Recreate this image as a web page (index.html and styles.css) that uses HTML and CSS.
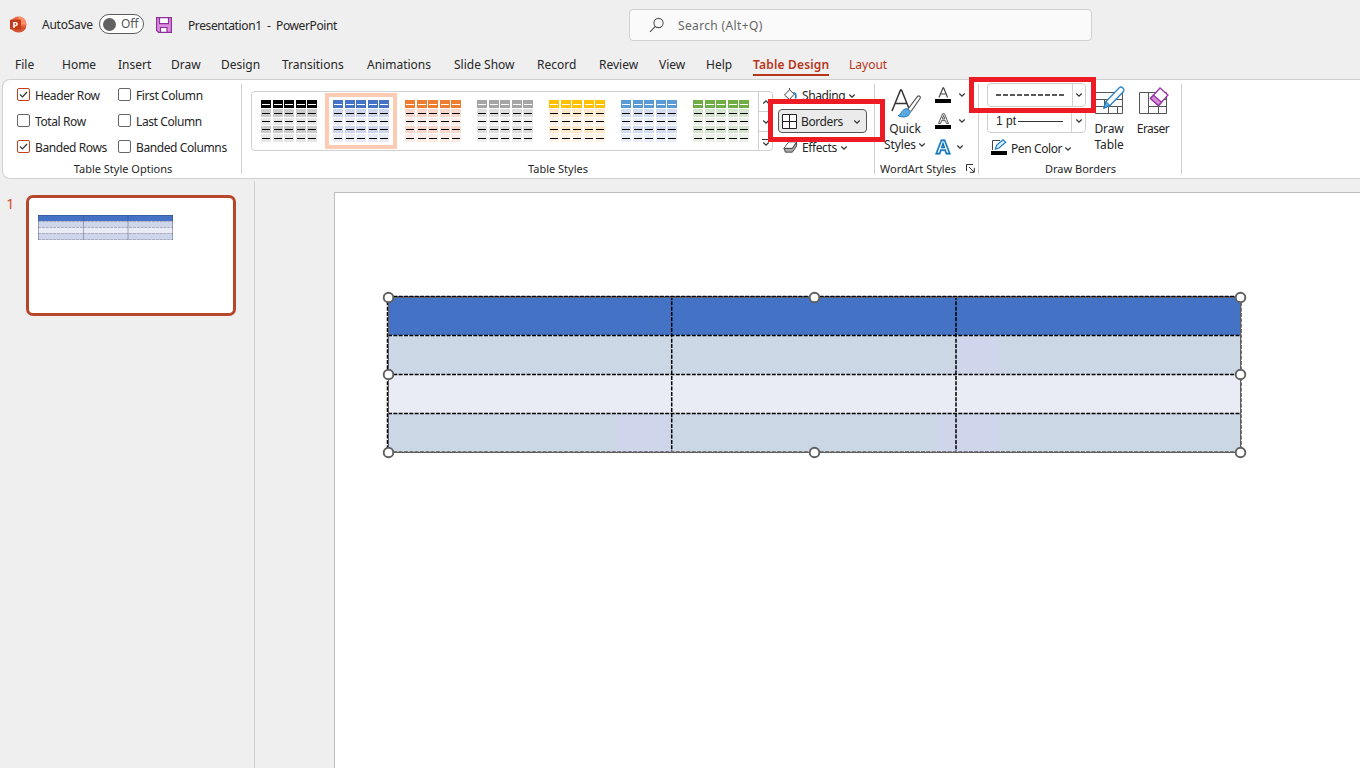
FILE: index.html
```
<!DOCTYPE html>
<html lang="en">
<head>
  <meta charset="UTF-8" />
  <meta name="viewport" content="width=device-width, initial-scale=1.0" />
  <title>Presentation1 - PowerPoint</title>
  <link rel="stylesheet" href="styles.css">
</head>
<body>
  <svg class="defs" width="0" height="0">
    <symbol id="chev" viewBox="0 0 8 6"><path d="M1.3 1.5 4 4.2 6.7 1.5" fill="none" stroke="#333" stroke-width="1.2"/></symbol>
  </svg>

  <header class="titlebar">
    <svg class="logo" width="17" height="17" viewBox="0 0 17 17">
      <circle cx="8.5" cy="8.5" r="8" fill="#ed6c47"/>
      <path d="M8.5.5a8 8 0 0 1 8 8h-8z" fill="#ff8f6b"/>
      <path d="M.8 10.500h15.400a8 8 0 0 1-15.400 0z" fill="#d35230"/>
      <rect x="0" y="3.500" width="11" height="10" rx="1" fill="#c13b1b"/>
      <text x="2.500" y="11.800" class="logo-p">P</text>
    </svg>
    <span class="autosave">AutoSave</span>
    <span class="toggle"><i></i>Off</span>
    <svg class="save" width="16" height="16" viewBox="0 0 16 16">
      <path d="M.6.6h14.800v14.800H2.600l-2-2z" fill="#d98fdc" stroke="#8f2f9c" stroke-width="1.200"/>
      <path d="M3.500.6h9v6h-9zM4.500 15.400v-4.900h6.500v4.900z" fill="#fff" stroke="#8f2f9c" stroke-width="1.200"/>
    </svg>
    <span class="doc-name">Presentation1&nbsp; -&nbsp; PowerPoint</span>
    <div class="search">
      <svg width="16" height="16" viewBox="0 0 16 16"><circle cx="9.500" cy="6" r="4.600" fill="none" stroke="#555" stroke-width="1.100"/><path d="M6.300 9.300 1 14.800" stroke="#555" stroke-width="1.200"/></svg>
      <span>Search (Alt+Q)</span>
    </div>
  </header>

  <nav class="tabs">
    <span>File</span><span>Home</span><span>Insert</span><span>Draw</span><span>Design</span>
    <span>Transitions</span><span>Animations</span><span>Slide Show</span><span>Record</span>
    <span>Review</span><span>View</span><span>Help</span>
    <span class="active">Table Design</span><span class="context">Layout</span>
  </nav>

  <section class="ribbon">
    <div class="group options">
      <div class="checks">
        <label class="on"><i><svg width="11" height="11" viewBox="0 0 11 11"><path d="M2 5.500 4.500 8 9 3"/></svg></i><span>Header Row</span></label>
        <label><i></i><span>First Column</span></label>
        <label><i></i><span>Total Row</span></label>
        <label><i></i><span>Last Column</span></label>
        <label class="on"><i><svg width="11" height="11" viewBox="0 0 11 11"><path d="M2 5.500 4.500 8 9 3"/></svg></i><span>Banded Rows</span></label>
        <label><i></i><span>Banded Columns</span></label>
      </div>
      <div class="caption">Table Style Options</div>
    </div>

    <div class="group styles">
      <div class="styles-body">
        <div class="gallery">
          <div class="thumbs" id="thumbs"></div>
          <div class="scroller">
            <b><svg width="8" height="6" class="up"><use href="#chev"/></svg></b>
            <b><svg width="8" height="6"><use href="#chev"/></svg></b>
            <b><svg width="10" height="9" viewBox="0 0 10 9"><path d="M1 1.500h8M2.300 4.500 5 7.200l2.700-2.700" fill="none" stroke="#333" stroke-width="1.200"/></svg></b>
          </div>
        </div>
        <div class="effects">
          <div class="cmd">
            <svg width="15" height="15" viewBox="0 0 15 15"><path d="M6.500 1.800 1.500 7l5 4.500 4.700-5.300-4.700-4.400V0" fill="#fff" stroke="#444"/><path d="M10.500 4.500c2.500.5 2.700 3 2 6" fill="none" stroke="#1e7fc9" stroke-width="1.700"/></svg>
            <span>Shading</span><svg width="8" height="6"><use href="#chev"/></svg>
          </div>
          <div class="cmd pressed">
            <svg width="15" height="15" viewBox="0 0 15 15"><path d="M.5.500h14v14H.5zM7.500.5v14M.5 7.500h14" fill="#fff" stroke="#222"/></svg>
            <span>Borders</span><svg width="8" height="6"><use href="#chev"/></svg>
          </div>
          <div class="cmd">
            <svg width="15" height="14" viewBox="0 0 16 14"><path d="M1 8.500 6 1.500h8.500l-4.500 7z" fill="#fff" stroke="#555"/><path d="M1 8.500h9L14.500 2v4L10 12.500H2.500z" fill="#aaa" stroke="#444"/></svg>
            <span>Effects</span><svg width="8" height="6"><use href="#chev"/></svg>
          </div>
        </div>
      </div>
      <div class="caption">Table Styles</div>
    </div>

    <div class="group wordart">
      <div class="wordart-body">
        <div class="big">
          <svg width="32" height="32" viewBox="0 0 32 32">
            <path d="M3 24 11.500 3h1L21 24M6 16.500h12" fill="none" stroke="#333" stroke-width="1.500"/>
            <path d="m19 22 9.500-12.500c1.500-1.500 3.500 0 2.500 2L22 24.500" fill="#fff" stroke="#555" stroke-width="1.200"/>
            <path d="M9 28.500c3 0 3-5 7-6.500 3-1 6 1.500 5 4-1.500 4.500-8 5-12 2.500z" fill="#5aa9e0" stroke="#2175b5"/>
          </svg>
          <span>Quick</span>
          <span>Styles <svg width="8" height="6"><use href="#chev"/></svg></span>
        </div>
        <div class="letters">
          <div><svg width="17" height="17" viewBox="0 0 17 17"><path d="M4 10.500 8 .8h.6l4 9.700M5.500 7h5.600" fill="none" stroke="#444" stroke-width="1.200"/><path d="M0 12h16v4H0z"/></svg><svg width="8" height="6"><use href="#chev"/></svg></div>
          <div><svg width="17" height="17" viewBox="0 0 17 17"><path d="M3.500 10.500 7.500.8h2l4 9.700h-2l-1-2.800h-4l-1 2.800zM7.200 6h2.700L8.500 2.500z" fill="#fff" stroke="#444" stroke-width=".9"/><path d="M0 12h16v4H0z"/></svg><svg width="8" height="6"><use href="#chev"/></svg></div>
          <div class="glow"><svg width="17" height="17" viewBox="0 0 17 17"><path d="M1.500 14.500 6.500 1.500h3l5 13h-3L10.300 11H5.700l-1.200 3.500zM6.500 8.500h3L8 4.200z" fill="#fff" stroke="#69b5e8" stroke-width="2.400"/><path d="M1.500 14.500 6.500 1.500h3l5 13h-3L10.300 11H5.700l-1.200 3.500zM6.500 8.500h3L8 4.200z" fill="#fff" stroke="#1673b9" stroke-width="1.300"/></svg><svg width="8" height="6"><use href="#chev"/></svg></div>
        </div>
      </div>
      <div class="caption">WordArt Styles
        <svg class="launcher" width="9" height="9" viewBox="0 0 9 9"><path d="M.5 7V.5H7M3 3l5 5M8.300 3.800v4.500H3.800" fill="none" stroke="#333"/></svg>
      </div>
    </div>

    <div class="group draw">
      <div class="draw-body">
        <div class="pens">
          <div class="combo">
            <svg width="84" height="22"><path d="M8 11h68" stroke="#222" stroke-width="1.600" stroke-dasharray="5 2"/></svg>
            <b><svg width="8" height="6"><use href="#chev"/></svg></b>
          </div>
          <div class="combo weight">
            <span>1 pt</span><hr>
            <b><svg width="8" height="6"><use href="#chev"/></svg></b>
          </div>
          <div class="cmd pen">
            <svg width="17" height="17" viewBox="0 0 17 17"><path d="M9 1.500H1.500V11" fill="none" stroke="#444"/><path d="m4.500 10 1.200-4L12 .7l2.700 2.500L8 9z" fill="#d9efff" stroke="#1e7fc9" stroke-width="1.200"/><path d="M0 12h16v4H0z"/></svg>
            <span>Pen Color</span><svg width="8" height="6"><use href="#chev"/></svg>
          </div>
        </div>
        <div class="big table-tool">
          <svg width="32" height="30" viewBox="0 0 32 30">
            <path d="M2.500 6.500h27v21h-27zM2.500 13.500h27M2.500 20.500h27M11.500 13.500v7M20.500 6.500v7M15.500 20.500v7M24.500 20.500v7" fill="#fafafa" stroke="#555"/>
            <path d="m11 22 2-6.500L26.500 1.500c2-1.500 5.500 1.500 4 4L17 19.500z" fill="#fff" stroke="#2584c9" stroke-width="1.300"/>
            <path d="m11 22 2-6.500 4 4z" fill="#5aa9e0" stroke="#2175b5"/>
          </svg>
          <span>Draw</span><span>Table</span>
        </div>
        <div class="big eraser">
          <svg width="32" height="30" viewBox="0 0 32 30">
            <path d="M2.500 6.500h27v21h-27zM11.500 6.500v21M11.500 20.500h18M21.500 13.500v14M21.500 13.500h8" fill="#fafafa" stroke="#555"/>
            <path d="m13.500 12.500 9.500-10.500 8 7-9.500 10.500z" fill="#fff" stroke="#9a35a8" stroke-width="1.300"/>
            <path d="m13.500 12.500 3-3.300 8 7-3 3.300z" fill="#d98fdc" stroke="#9a35a8" stroke-width="1.300"/>
          </svg>
          <span>Eraser</span>
        </div>
      </div>
      <div class="caption">Draw Borders</div>
    </div>

    <div class="mark mark-borders"></div>
    <div class="mark mark-style"></div>
  </section>

  <main class="workspace">
    <aside class="pane">
      <span class="num">1</span>
      <div class="slide-thumb">
        <svg class="mini" width="135" height="25" viewBox="0 0 135 25">
          <path d="M0 0h135v25H0z" fill="#cfd5ea"/>
          <path d="M0 0h135v6H0z" fill="#4472c4"/>
          <path d="M0 12h135v6H0z" fill="#e9ebf5"/>
          <path d="M0 .5h135" stroke="#3a5fa3"/>
          <path d="M0 6.500h135M0 12.500h135M0 18.500h135M0 24.500h135" stroke="#a9aec2" stroke-dasharray="3 .8"/>
          <path d="M.5 0v25M45.500 0v25M90 0v25M134.500 0v25" stroke="#3a4468" stroke-opacity=".4"/>
        </svg>
      </div>
    </aside>
    <div class="stage">
      <div class="slide">
        <div class="table">
          <div class="row head"></div>
          <div class="row odd"></div>
          <div class="row"></div>
          <div class="row odd last"></div>
          <svg class="lines" width="866" height="170" viewBox="381 290 866 170">
            <g class="dash">
              <path d="M388 296.500h853M388 335.500h853M388 374.500h853M388 413.500h853"/>
              <path d="M387.500 296v156M671.700 296v156M956 296v156"/>
            </g>
            <path class="soft" d="M388 451.500h853M1241.500 297v155"/>
            <path class="frame" d="M388.500 297.500h852v155h-852z"/>
            <g class="handles">
              <circle cx="388.500" cy="297.500" r="4.800"/><circle cx="814.500" cy="297.500" r="4.800"/><circle cx="1240.500" cy="297.500" r="4.800"/>
              <circle cx="388.500" cy="374.500" r="4.800"/><circle cx="1240.500" cy="374.500" r="4.800"/>
              <circle cx="388.500" cy="452.500" r="4.800"/><circle cx="814.500" cy="452.500" r="4.800"/><circle cx="1240.500" cy="452.500" r="4.800"/>
            </g>
          </svg>
        </div>
      </div>
    </div>
  </main>

  <script src="script.js"></script>
</body>
</html>
```
FILE: styles.css
```
* {
  box-sizing: border-box;
}
body {
  margin: 0;
  width: 1360px;
  height: 768px;
  overflow: hidden;
  background: #efefef;
  color: #262626;
  font: 12px/16px "Noto Sans", "Open Sans", sans-serif;
  white-space: nowrap;
}
svg {
  display: block;
  flex: none;
}
.defs {
  position: absolute;
}

/* title bar */
.titlebar {
  display: flex;
  align-items: center;
  height: 50px;
  padding-left: 10px;
}
.logo {
  margin-top: -1px;
}
.logo-p {
  font: bold 9px "Open Sans", sans-serif;
  fill: #fff;
}
.autosave {
  width: 57px;
  margin-left: 15px;
  letter-spacing: -.25px;
}
.toggle {
  display: flex;
  align-items: center;
  width: 45px;
  height: 20px;
  margin-top: -2px;
  padding-left: 3px;
  border: 1px solid #5c5c5c;
  border-radius: 10px;
  background: #fff;
  color: #555;
}
.toggle i {
  width: 13px;
  height: 13px;
  margin-right: 5px;
  border-radius: 50%;
  background: #616161;
}
.save {
  margin-left: 12px;
}
.doc-name {
  width: 441px;
  margin-left: 16px;
  padding-top: 2px;
  letter-spacing: -.39px;
}
.search {
  display: flex;
  align-items: center;
  gap: 13px;
  width: 463px;
  height: 32px;
  padding-left: 19px;
  border: 1px solid #d1d1d1;
  border-radius: 4px;
  background: #fafafa;
  color: #666;
  letter-spacing: .36px;
}
.search span {
  padding-top: 1px;
}

/* tabs */
.tabs {
  display: grid;
  grid-template-columns: 47px 56px 53px 50px 61px 85px 87px 83px 62px 60px 47px 47px 96px 60px;
  height: 29px;
  padding: 7px 0 0 15px;
}
.tabs .active {
  justify-self: start;
  height: 19px;
  border-bottom: 2px solid #b7361a;
  color: #b7361a;
  font-weight: 600;
  letter-spacing: .18px;
}
.tabs .context {
  color: #b7361a;
}

/* ribbon */
.ribbon {
  position: relative;
  display: flex;
  height: 100px;
  margin-left: 2px;
  padding-top: 4px;
  border: 1px solid #d0d0d0;
  border-right: 0;
  border-radius: 8px 0 0 8px;
  background: #fff;
}
.group {
  display: flex;
  flex-direction: column;
  height: 90px;
  border-right: 1px solid #d0d0d0;
}
.caption {
  height: 16px;
  margin-top: 1px;
  text-align: center;
  font-size: 11px;
}
.options {
  width: 239px;
}
.checks {
  display: grid;
  grid-template: repeat(3, 26px) / 101px 1fr;
  height: 78px;
  padding-left: 14px;
  margin-top: -2px;
}
.options .caption {
  padding-left: 2px;
}
.checks label {
  display: flex;
  align-items: center;
  gap: 5px;
}
.checks span {
  padding-top: 2px;
  letter-spacing: -.4px;
}
.checks i {
  width: 13px;
  height: 13px;
  margin-top: -2px;
  border: 1px solid #666;
  border-radius: 2px;
}
.checks .on i {
  border-color: #c43e1c;
}
.checks path {
  fill: none;
  stroke: #333;
  stroke-width: 1.2;
}
.styles {
  width: 633px;
}
.styles-body {
  display: flex;
  height: 76px;
  padding-left: 9px;
}
.gallery {
  display: flex;
  width: 522px;
  height: 60px;
  margin-top: 7px;
  border: 1px solid #d0d0d0;
  border-radius: 4px;
}
.thumbs {
  display: flex;
  width: 506px;
  padding: 1px;
}
.thumb {
  display: grid;
  grid-template: 8px 8px 7px 7px 8px / repeat(5, 10px);
  gap: 1px 1.5px;
  width: 72px;
  height: 56px;
  padding: 3px 4px;
  border: 4px solid transparent;
}
.thumb.selected {
  border-color: #fccbb4;
}
.thumb i {
  display: flex;
  align-items: center;
  justify-content: center;
}
.thumb i::after {
  content: "";
  width: 8px;
  height: 1px;
  background: #000;
}
.thumb .h::after {
  background: #fff;
}
.scroller {
  width: 15px;
  border-left: 1px solid #d0d0d0;
}
.scroller b {
  display: flex;
  align-items: center;
  justify-content: center;
  height: 20px;
  border-bottom: 1px solid #d0d0d0;
}
.scroller b:last-child {
  border: 0;
}
.up {
  transform: scaleY(-1);
}
.effects {
  margin: -2px 0 0 5px;
}
.cmd {
  display: flex;
  align-items: center;
  height: 26px;
  padding-left: 5px;
  gap: 4px;
  letter-spacing: -.4px;
}
.cmd span {
  padding-top: 2px;
}
.cmd > span + svg {
  margin: 2px 0 0 -1px;
}
.cmd.pressed {
  width: 89px;
  height: 24px;
  margin: 1px 0;
  padding-left: 3px;
  border: 1px solid #555;
  border-radius: 4px;
  background: #ebebeb;
}
.pressed span {
  width: 49px;
}
.wordart {
  width: 104px;
}
.wordart-body {
  display: flex;
  height: 77px;
  padding-left: 10px;
}
.big {
  display: flex;
  flex-direction: column;
  align-items: center;
  width: 40px;
}
.big > svg {
  margin: 3px 0 2px;
}
.big span {
  display: flex;
  align-items: center;
  gap: 2px;
  letter-spacing: -.1px;
}
.letters {
  margin: -2px 0 0 10px;
}
.letters div {
  display: flex;
  align-items: center;
  gap: 6px;
  height: 26px;
}
.letters .glow {
  gap: 4px;
}
.wordart .caption {
  display: flex;
  align-items: center;
  gap: 10px;
  margin-top: 0;
  padding: 1px 0 0 5px;
}
.draw {
  width: 203px;
}
.draw-body {
  display: flex;
  height: 77px;
  padding-left: 8px;
}
.draw .caption {
  margin-top: 0;
  padding: 1px 0 0 1px;
}
.pens {
  width: 99px;
  margin-top: -1px;
}
.combo {
  display: flex;
  align-items: center;
  width: 99px;
  height: 24px;
  margin-bottom: 2px;
  border: 1px solid #d0d0d0;
  border-radius: 4px;
}
.combo b {
  display: flex;
  align-items: center;
  justify-content: center;
  width: 14px;
  height: 22px;
  border-left: 1px solid #d0d0d0;
}
.weight span {
  width: 22px;
  margin-left: 8px;
  font: 12px "Liberation Sans", sans-serif;
}
.weight hr {
  width: 46px;
  margin: 0 8px 0 0;
  border: 0;
  border-top: 1px solid #333;
}
.pen {
  height: 25px;
  padding-left: 4px;
  gap: 3px;
}
.table-tool {
  margin: 0 4px 0 3px;
}
.table-tool > svg,
.eraser > svg {
  margin: 2px 0 5px;
}
.eraser span {
  letter-spacing: -.5px;
}

/* red highlight boxes */
.mark {
  position: absolute;
  border: 5px solid #ed1c24;
}
.mark-borders {
  left: 765px;
  top: 19px;
  width: 117px;
  height: 43px;
}
.mark-style {
  left: 966px;
  top: -3px;
  width: 127px;
  height: 36px;
}

/* slides */
.workspace {
  display: flex;
  height: 587px;
  margin-top: 2px;
}
.pane {
  display: flex;
  flex: none;
  align-items: flex-start;
  width: 255px;
  padding: 14px 0 0 6px;
  border-right: 1px solid #d0d0d0;
}
.num {
  width: 20px;
  color: #d24726;
  font: 15px/16px "Open Sans", sans-serif;
}
.slide-thumb {
  width: 210px;
  height: 121px;
  padding: 17px 9px;
  border: 3px solid #b7472a;
  border-radius: 7px;
  background: #fff;
}
.stage {
  padding: 11px 0 0 79px;
}
.slide {
  width: 1036px;
  height: 583px;
  padding: 103px 0 0 53px;
  border: 1px solid #bdbdbd;
  background: #fff;
}
.table {
  position: relative;
  width: 853px;
}
.row {
  height: 39px;
  background: #e9ebf5;
}
.row.head {
  background: #4472c4;
}
.row.odd {
  background: linear-gradient(90deg, #cfd5ea 5px, #ccd7e6 5px, #ccd7e6 568px, #cfd5ea 568px, #cfd5ea 611px, #ccd7e6 611px);
}
.row.last {
  background: linear-gradient(90deg, #cfd5ea 5px, #ccd7e6 5px, #ccd7e6 227px, #cfd5ea 227px, #cfd5ea 284px, #ccd7e6 284px, #ccd7e6 548px, #cfd5ea 548px, #cfd5ea 611px, #ccd7e6 611px);
}
.lines {
  position: absolute;
  left: -7px;
  top: -6px;
}
.dash {
  fill: none;
  stroke: #000;
  stroke-width: 1.5;
  stroke-dasharray: 4 1.33;
}
.soft {
  fill: none;
  stroke: #777;
  stroke-dasharray: 4 1.33;
}
.frame {
  fill: none;
  stroke: #5f5f5f;
}
.handles {
  fill: #fff;
  stroke: #5f5f5f;
  stroke-width: 1.9;
}
```
FILE: script.js
```
// head, band 1, band 2
const tableStyles = [
  ['#000000', '#cbcbcb', '#e7e7e7'],
  ['#4472c4', '#cfd5ea', '#e9ebf5'],
  ['#ed7d31', '#f8d7cd', '#fcece8'],
  ['#a5a5a5', '#dedede', '#efefef'],
  ['#ffc000', '#ffe8cb', '#fff4e7'],
  ['#5b9bd5', '#d2deef', '#eaeff7'],
  ['#70ad47', '#d5e3cf', '#ebf1e9']
];

const thumbs = document.getElementById('thumbs');
tableStyles.forEach((colors, n) => {
  const thumb = document.createElement('div');
  thumb.className = n === 1 ? 'thumb selected' : 'thumb';
  for (let i = 0; i < 25; i++) {
    const row = Math.floor(i / 5);
    const cell = document.createElement('i');
    if (row === 0) cell.className = 'h';
    cell.style.background = row === 0 ? colors[0] : colors[row % 2 ? 1 : 2];
    thumb.appendChild(cell);
  }
  thumbs.appendChild(thumb);
});
```
